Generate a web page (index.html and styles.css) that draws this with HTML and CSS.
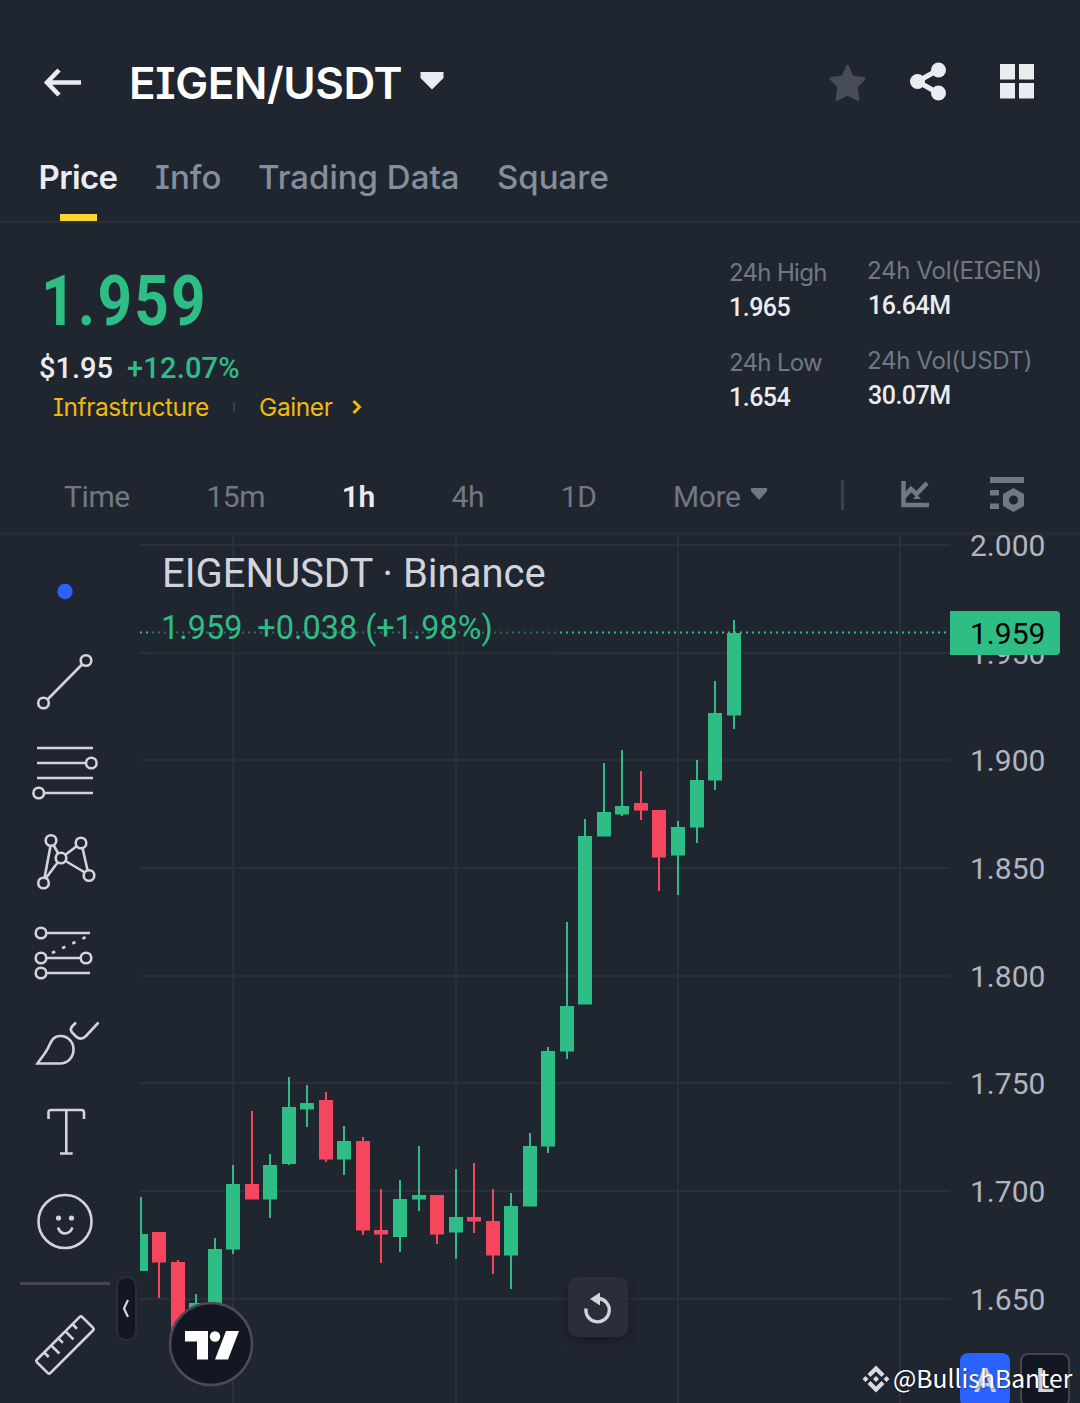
FILE: index.html
```html
<!DOCTYPE html>
<html lang="en">
<head>
    <title>EIGEN/USDT</title>
    <meta charset="UTF-8">
    <meta name="viewport" content="width=device-width, initial-scale=1.0" />
    <link rel="stylesheet" href="styles.css">
</head>

<body>
    <header class="topbar">
        <svg class="back" width="40" height="32" viewBox="0 0 40 32"><path d="M17 3L5 15.500L17 28M5 15.500H39" fill="none" stroke="#eaecef" stroke-width="4.600"/></svg>
        <h1>EIGEN/USDT</h1>
        <svg class="caret" width="24" height="20" viewBox="0 0 24 20"><path d="M.5 1H23.500V7L12 18.500L.5 7Z" fill="#eaecef"/></svg>
        <div class="actions">
            <svg width="38" height="40" viewBox="0 0 38 40"><path d="M20.500 5.500L25 16L37 17.500L29 26L31 38.500L20.500 33L10 38.500L12 26L4 17.500L16 16Z" fill="#474d57" stroke="#474d57" stroke-width="3" stroke-linejoin="round"/></svg>
            <svg width="38" height="40" viewBox="0 0 38 40"><g fill="#eaecef"><path d="M29 9L8.500 20.500L29 32" fill="none" stroke="#eaecef" stroke-width="5"/><circle cx="8.500" cy="20.500" r="7.500"/><circle cx="29.500" cy="9" r="7.500"/><circle cx="29.500" cy="32" r="7.500"/></g></svg>
            <svg width="36" height="40" viewBox="0 0 36 40"><path d="M1 3H16V18.500H1ZM20 3H35V18.500H20ZM1 22H16V37.500H1ZM20 22H35V37.500H20Z" fill="#eaecef"/></svg>
        </div>
    </header>

    <nav class="tabs">
        <a class="active">Price</a>
        <a class="info">Info</a>
        <a class="trading">Trading Data</a>
        <a class="square">Square</a>
    </nav>

    <section class="ticker">
        <div class="quote">
            <div class="last">1.959</div>
            <div class="fiat">$1.95 <span class="change">+12.07%</span></div>
            <div class="tags">
                <span class="infra">Infrastructure</span>
                <i></i>
                <span class="gainer">Gainer</span>
                <svg width="12" height="16" viewBox="0 0 12 16"><path d="M2.500 2L8.500 8L2.500 14" fill="none" stroke="#f0b90b" stroke-width="3"/></svg>
            </div>
        </div>
        <div class="stats">
            <dl><dt>24h High</dt><dd>1.965</dd><dt>24h Low</dt><dd>1.654</dd></dl>
            <dl class="volume"><dt>24h Vol(EIGEN)</dt><dd>16.64M</dd><dt>24h Vol(USDT)</dt><dd>30.07M</dd></dl>
        </div>
    </section>

    <nav class="intervals">
        <a>Time</a>
        <a>15m</a>
        <a class="active">1h</a>
        <a>4h</a>
        <a>1D</a>
        <a class="more">More <svg width="18" height="14" viewBox="0 0 18 14"><path d="M1 0H17V3L9 12L1 3Z" fill="#707885"/></svg></a>
        <i></i>
        <svg class="indicator" width="30" height="30" viewBox="0 0 30 30"><path d="M3.500 1V25H29M4 17L11 9L16.500 14L27 3" fill="none" stroke="#707885" stroke-width="4.500"/><path d="M17 14.500L21 19H13Z" fill="#707885"/></svg>
        <svg class="settings" width="36" height="38" viewBox="0 0 36 38"><path d="M1 1H35V7H1ZM1 14H10V19.500H1ZM1 27.500H10V33H1Z" fill="#707885"/><path d="M24.500 12L35 18V30L24.500 36L14 30V18ZM24.500 19.500A4.500 4.500 0 1 0 24.500 28.500A4.500 4.500 0 1 0 24.500 19.500Z" fill="#707885" fill-rule="evenodd"/></svg>
    </nav>

    <main class="chart">
        <aside class="tools">
            <svg viewBox="0 0 140 90"><circle cx="65" cy="44.500" r="7.700" fill="#2962ff"/></svg>
            <svg viewBox="0 0 140 90"><path d="M47.500 62.500L82 27.500"/><circle cx="86" cy="23.500" r="5.300"/><circle cx="43.500" cy="66" r="5.300"/></svg>
            <svg viewBox="0 0 140 90"><path d="M37 21H93M37 36H86M37 51H93M44 66H93"/><circle cx="91.300" cy="36" r="5.300"/><circle cx="38.700" cy="66" r="5.300"/></svg>
            <svg viewBox="0 0 140 90"><path d="M50.500 29L44.500 61M54 29L58 36M58 45L46 61M65 38L77 29M65.500 44L85 55.500M82.500 31L87.500 53"/><circle cx="51" cy="23.500" r="5.300"/><circle cx="81" cy="26" r="5.300"/><circle cx="61" cy="41" r="5.300"/><circle cx="43.500" cy="66" r="5.300"/><circle cx="89" cy="58.500" r="5.300"/></svg>
            <svg viewBox="0 0 140 90"><path d="M46 26H90M46 51H81M46 66H90"/><path d="M52 46L86 30" stroke-dasharray="3.500 7.700"/><circle cx="41" cy="26" r="5.300"/><circle cx="41" cy="51" r="5.300"/><circle cx="86" cy="51" r="5.300"/><circle cx="41" cy="66" r="5.300"/></svg>
            <svg viewBox="0 0 140 90"><path d="M37.500 66.500H60C68 66.500 73.500 60 73.500 52.500C73.500 45 68 39 60.500 39C54 39 51.500 43 49 49C46 56 41 61 37.500 66.500Z"/><path d="M76 25.500L72.500 29Q69.500 32 72 35.500L76 39.500Q81 44 86 39L98.500 25.500"/></svg>
            <svg viewBox="0 0 140 90"><path d="M48.500 32V25.500Q48.500 23 51 23H81.500Q84 23 84 25.500V32M66.300 23V66.500M60 66.500H72.700"/></svg>
            <svg viewBox="0 0 140 90"><circle cx="65" cy="44.500" r="26.500"/><g class="eyes"><circle cx="58.500" cy="41" r="2.600"/><circle cx="71.500" cy="41" r="2.600"/></g><path d="M58 50.500Q60 56.500 65 56.500Q70 56.500 72.500 50.500"/></svg>
            <hr />
            <svg viewBox="0 0 140 90"><g transform="translate(65 45) rotate(-45)"><rect x="-32" y="-9.500" width="64" height="19" rx="2"/><path d="M-20-9V-3M-10-9V2M0-9V-3M10-9V2M20-9V-3"/></g></svg>
        </aside>

        <div class="plot">
            <svg width="810" height="868" viewBox="140 535 810 868">
                <path class="grid" d="M233 535V1403M456 535V1403M678 535V1403M900 535V1403M140 545H950M140 653H950M140 760H950M140 868H950M140 976H950M140 1083H950M140 1191H950M140 1299H950"/>
                <path class="price-line" d="M140 632.500H950"/>

                <path class="up wick" d="M141 1197V1240M196 1294V1330M215 1238V1260M233 1165V1254M270 1154V1218M289 1077V1165M307 1085V1127M344 1126V1175M400 1180V1252M419 1146V1211M456 1169V1259M511 1193V1289M530 1133V1160M548 1047V1153M567 922V1059M585 819V850M604 763V820M622 750V816M678 821V895M697 760V843M715 681V790M734 620V729"/>
                <path class="down wick" d="M159 1240V1298M178 1260V1280M252 1111V1190M326 1092V1162M363 1137V1235M381 1189V1263M437 1200V1244M474 1163V1233M493 1189V1274M641 771V820M659 820V891"/>

                <path class="up" d="M141 1234V1271M196 1303V1340M215 1249V1330M233 1184V1249.500M270 1165V1199.500M289 1107V1164M307 1103V1109.500M344 1141V1159.500M400 1199V1237M419 1195V1199.500M456 1217V1232.500M511 1206V1255.500M530 1146V1206.500M548 1051V1146.500M567 1006V1051.500M585 836V1004.500M604 812V836.500M622 806V814.500M678 827V855.500M697 780V827.500M715 713V780.500M734 633V715.500"/>
                <path class="down" d="M159 1232V1262.500M178 1262V1335M252 1184V1199.500M326 1100V1159.500M363 1141V1230.500M381 1230V1234.500M437 1195V1234.500M474 1217V1221.500M493 1221V1255.500M641 803V810.500M659 810V857.500"/>
            </svg>
            <div class="legend">
                <div class="symbol">EIGENUSDT · Binance</div>
                <div class="values"><span>1.959</span><span>+0.038 (+1.98%)</span></div>
            </div>
            <svg class="tv" width="86" height="86" viewBox="0 0 86 86"><circle cx="43" cy="43" r="41" fill="#131722" stroke="#4a4d58" stroke-width="2.500"/><path d="M17 30H40V58.500H29V40.500H17ZM58 30H71L60 58.500H47Z" fill="#fff"/><circle cx="47" cy="35.500" r="5.200" fill="#fff"/></svg>
            <button class="reset"><svg width="60" height="60" viewBox="0 0 60 60"><path d="M18 31.500A11.700 11.700 0 1 0 31 21.500" fill="none" stroke="#d1d4dc" stroke-width="3.300"/><path d="M22 22L32 15.500V28.500Z" fill="#d1d4dc"/></svg></button>
        </div>
        <button class="collapse"><svg width="17" height="20" viewBox="0 0 17 20"><path d="M10 1L6 9.500L10 18" fill="none" stroke="#d1d4dc" stroke-width="2.200"/></svg></button>

        <div class="axis">
            <span>2.000</span>
            <span>1.950</span>
            <span>1.900</span>
            <span>1.850</span>
            <span>1.800</span>
            <span>1.750</span>
            <span>1.700</span>
            <span>1.650</span>
            <div class="current">1.959</div>
            <button class="auto">A</button>
            <button class="log">L</button>
        </div>

        <div class="watermark">
            <svg width="28" height="28" viewBox="0 0 28 28"><g fill="#d9dbe3"><path d="M14 .5L22.500 9L19.500 12L14 6.500L8.500 12L5.500 9ZM14 27.500L5.500 19L8.500 16L14 21.500L19.500 16L22.500 19ZM14 11L17 14L14 17L11 14ZM3.500 11L6.500 14L3.500 17L.5 14ZM24.500 11L27.500 14L24.500 17L21.500 14Z"/></g></svg>
            <span>@BullishBanter</span>
        </div>
    </main>
</body>
</html>
```
FILE: styles.css
```css
* { box-sizing: border-box; }
html { margin: 0; padding: 0; }
body { margin: 0; width: 1080px; height: 1403px; overflow: hidden; font-family: Roboto, sans-serif; color: #eaecef; background-color: #202630; }
svg { display: block; flex: none; }
button { padding: 0; border: 0; font-family: inherit; }
i { display: block; flex: none; background: #3a414d; }

.topbar { display: flex; align-items: center; height: 128px; padding: 40px 45px 4px 42px; }
.topbar .back { margin-top: 1px; }
h1 { margin: 2px 0 0 47px; width: 274px; font-family: Inter, sans-serif; font-size: 44px; line-height: 60px; font-weight: 600; letter-spacing: -0.4px; font-feature-settings: "cv08"; color: #fff; white-space: nowrap; }
.topbar .caret { margin: -3px 0 0 17px; }
.actions { display: flex; margin-left: auto; margin-top: -2px; gap: 44px; }
.actions svg:last-child { margin-left: 8px; }

.tabs { display: flex; height: 95px; padding-left: 38px; border-bottom: 2px solid #2a3039; font-family: Inter, sans-serif; font-feature-settings: "cv08"; font-size: 33px; line-height: 48px; font-weight: 500; color: #848e9c; white-space: nowrap; }
.tabs a { padding-top: 25px; }
.tabs .active { display: flex; flex-direction: column; align-items: center; justify-content: space-between; width: 80px; color: #eaecef; font-weight: 600; letter-spacing: -0.6px; }
.tabs .active::after { content: ""; width: 37px; height: 7px; background: #fcd535; }
.tabs .info { margin-left: 37px; width: 66px; }
.tabs .trading { margin-left: 37px; width: 201px; }
.tabs .square { margin-left: 38px; }

.ticker { display: flex; justify-content: space-between; height: 239px; padding: 32px 39px 0; }
/* tall, narrow digits */
.last { width: 190px; margin-left: 2px; font-size: 70px; line-height: 92px; font-weight: 700; letter-spacing: 2.6px; color: #2ebd85; transform: scaleX(0.86); transform-origin: left; }
.fiat { display: flex; gap: 14px; margin-top: -4px; font-size: 29px; line-height: 50px; font-weight: 500; }
.change { color: #2ebd85; letter-spacing: 0.2px; }
.tags { display: flex; align-items: center; margin: -6px 0 0 14px; height: 40px; font-family: Inter, sans-serif; font-feature-settings: "cv08"; font-size: 24.5px; letter-spacing: -0.4px; color: #f0b90b; }
.tags .infra { width: 157px; }
.tags .gainer { width: 73px; }
.tags i { width: 2px; height: 10px; margin: 0 24px 0 23px; }
.tags svg { margin-left: 19px; }
.stats { display: flex; width: 312px; }
dl { margin: 2px 0 0; width: 139px; white-space: nowrap; }
dl.volume { margin-top: 0; width: 173px; }
dt { font-family: Inter, sans-serif; font-feature-settings: "cv08"; font-size: 24px; line-height: 31px; letter-spacing: -0.7px; color: #707885; }
.volume dt { margin-left: -1px; letter-spacing: -0.3px; }
dd { margin: 0 0 19px; font-size: 25px; line-height: 40px; font-weight: 500; letter-spacing: -0.5px; }

.intervals { display: flex; align-items: center; height: 73px; padding: 0 0 3px 64px; border-bottom: 3px solid #262c35; font-size: 30px; letter-spacing: -0.4px; color: #707885; }
.intervals a { padding-top: 2px; margin-right: 76.6px; }
.intervals .active { color: #eaecef; font-weight: 600; }
.intervals .more { display: flex; align-items: center; gap: 9px; margin-right: 73px; }
.intervals .more svg { margin-top: -3px; }
.intervals i { width: 3px; height: 30px; margin-top: -2px; }
.intervals .indicator { margin: -2px 0 0 56px; }
.intervals .settings { margin: -1px 0 0 59px; }

.chart { display: flex; position: relative; height: 868px; }
.tools { width: 140px; padding-top: 12px; }
.tools svg { width: 140px; height: 90px; fill: none; stroke: #d1d4dc; stroke-width: 2.6; }
.tools svg:first-child { stroke: none; }
.tools .eyes { fill: #d1d4dc; stroke: none; }
.tools hr { width: 90px; height: 3px; margin: 15px 0 15px 20px; border: 0; background: #434751; }

.plot { position: relative; width: 810px; }
.plot path { fill: none; }
.plot .grid { stroke: #2a303a; stroke-width: 2; }
.plot .price-line { stroke: #2ebd85; stroke-width: 2; stroke-dasharray: 2 4; }
.plot .up { stroke: #2ebd85; stroke-width: 14; }
.plot .down { stroke: #f6465d; stroke-width: 14; }
.plot .wick { stroke-width: 2; }
.plot .tv path { fill: #fff; }
.legend { position: absolute; left: 12px; top: 14px; padding: 0 10px; color: #d1d4dc; white-space: nowrap; }
.symbol { font-size: 40px; line-height: 50px; }
.values { display: flex; gap: 15px; margin: 4px -10px 0; padding: 0 8px 0 9px; font-size: 32.4px; line-height: 50px; color: #2ebd85; background: rgba(32, 38, 48, 0.5); }
.tv { position: absolute; left: 28px; top: 766px; }
.reset { position: absolute; left: 428px; top: 742px; width: 60px; height: 60px; border-radius: 9px; background: #292e39; box-shadow: 0 4px 8px rgba(12, 15, 24, 0.5); }
.reset path + path { fill: #d1d4dc; }
.collapse { position: absolute; left: 116px; top: 741px; width: 21px; height: 65px; border: 2px solid #2a2e39; border-radius: 10px; background: #131722; }

.axis { display: flex; flex-direction: column; position: relative; width: 130px; gap: 67.7px; padding-left: 20px; margin-top: -9px; font-size: 30px; line-height: 40px; color: #b2b5be; }
.current { position: absolute; left: 0; top: 85px; width: 110px; height: 44px; padding-left: 20px; border-radius: 0 4px 4px 0; line-height: 46px; color: #000; background: #2ebd85; }
.auto, .log { position: absolute; top: 827px; width: 50px; height: 54px; border-radius: 8px; font-size: 34px; font-weight: 500; color: #d1d4dc; }
.auto { left: 10px; background: #2962ff; }
.log { left: 70px; border: 2px solid #434651; background: #131722; }

.watermark { display: flex; align-items: center; position: absolute; left: 862px; top: 826px; height: 36px; gap: 3px; font-family: "Noto Sans CJK SC", sans-serif; font-size: 24.7px; color: #fff; text-shadow: 1px 1px 2px rgba(0, 0, 0, 0.4); }
.watermark span { margin-top: -5px; }
```
